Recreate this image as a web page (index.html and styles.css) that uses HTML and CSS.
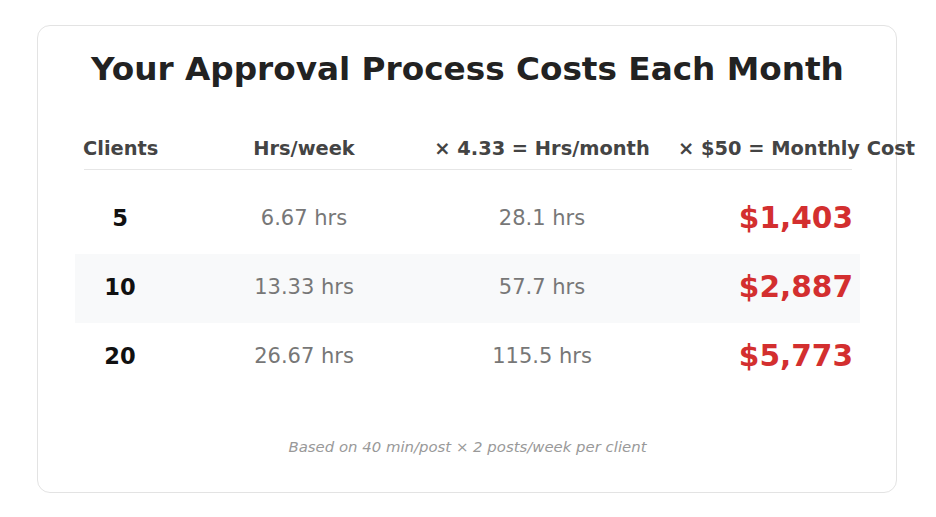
FILE: index.html
```html
<!DOCTYPE html>
<html lang="en">
<head>
<meta charset="utf-8">
<title>Approval Process Costs</title>
<link rel="stylesheet" href="styles.css">
</head>
<body>
  <div class="card">
    <h1 class="title">Your Approval Process Costs Each Month</h1>
    <div class="table">
      <div class="head">
        <div class="hc c1">Clients</div>
        <div class="hc c2">Hrs/week</div>
        <div class="hc c3">× 4.33 = Hrs/month</div>
        <div class="hc c4">× $50 = Monthly Cost</div>
      </div>
      <div class="row">
        <div class="c1"><span class="num">5</span></div>
        <div class="c2 val">6.67 hrs</div>
        <div class="c3 val">28.1 hrs</div>
        <div class="c4 cost">$1,403</div>
      </div>
      <div class="row alt">
        <div class="c1"><span class="num">10</span></div>
        <div class="c2 val">13.33 hrs</div>
        <div class="c3 val">57.7 hrs</div>
        <div class="c4 cost">$2,887</div>
      </div>
      <div class="row">
        <div class="c1"><span class="num">20</span></div>
        <div class="c2 val">26.67 hrs</div>
        <div class="c3 val">115.5 hrs</div>
        <div class="c4 cost">$5,773</div>
      </div>
    </div>
    <p class="note">Based on 40 min/post × 2 posts/week per client</p>
  </div>
</body>
</html>
```
FILE: styles.css
```css
* { box-sizing: border-box; }
html, body { margin: 0; padding: 0; background: #fff; }
body {
  font-family: "DejaVu Sans", sans-serif;
  padding-top: 25px;
}
.card {
  width: 860px;
  margin: 0 auto 0 37px;
  border: 1px solid #e3e3e3;
  border-radius: 13px;
  padding: 25px 36px 36px 37px;
}
.title {
  margin: 0;
  font-size: 32.7px;
  font-weight: bold;
  color: #222;
  text-align: center;
  line-height: 37px;
}
.table { margin-top: 50px; }
.head, .row {
  display: grid;
  grid-template-columns: 120px 200px 276px 173px;
}
.head {
  margin: 0 8px 0 9px;
  padding-bottom: 9px;
  border-bottom: 1px solid #e6e6e6;
  margin-bottom: 15px;
}
.hc {
  font-size: 19.4px;
  font-weight: bold;
  color: #444;
  line-height: 22px;
  white-space: nowrap;
}
.head .c1 { text-align: left; margin-left: -1px; }
.head .c2, .head .c3 { text-align: center; }
.head .c4 { text-align: left; margin-left: -2px; }
.row {
  height: 69px;
  align-items: center;
  padding: 0 8px 4px 9px;
}
.row.alt { background: #f8f9fa; }
.row .c1 { text-align: left; }
.num {
  display: inline-block;
  width: 72px;
  text-align: center;
  font-size: 22.6px;
  font-weight: bold;
  color: #111;
}
.val {
  text-align: center;
  font-size: 21px;
  color: #777;
}
.cost {
  text-align: right;
  font-size: 29.6px;
  font-weight: bold;
  color: #d32f2f;
}
.note {
  margin: 46px 0 0;
  text-align: center;
  font-size: 14.9px;
  font-style: italic;
  color: #999;
  line-height: 18px;
}
```
